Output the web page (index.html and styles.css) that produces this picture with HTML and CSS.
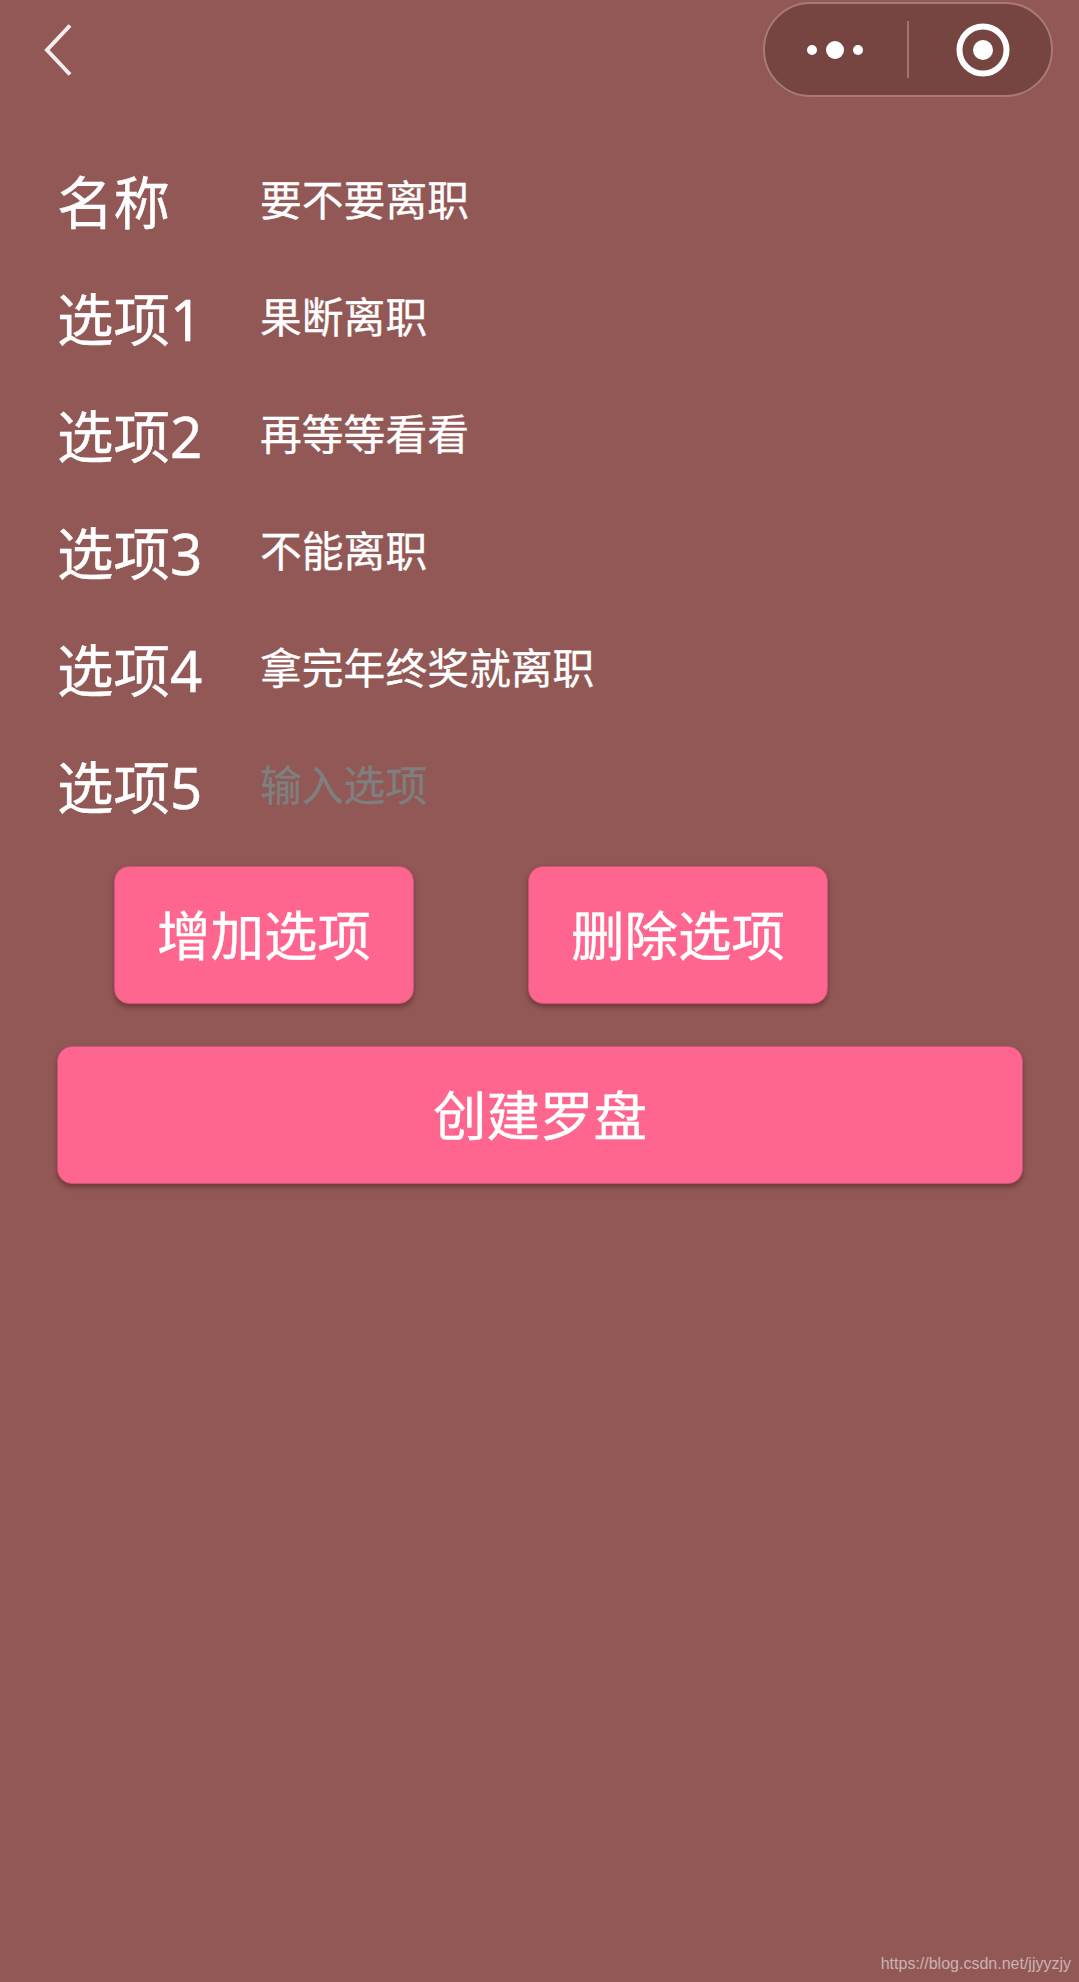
FILE: index.html
```html
<!DOCTYPE html>
<html lang="zh-CN">
<head>
<meta charset="utf-8">
<title>创建罗盘</title>
<link rel="stylesheet" href="styles.css">
</head>
<body>
<div class="page">
  <header class="nav">
    <svg class="back" viewBox="0 0 28 52" width="28" height="52"><path d="M26 1.500 3 26l23 24.500" fill="none" stroke="#f5eeee" stroke-width="4"/></svg>
    <div class="capsule">
      <div class="cap-left">
        <svg viewBox="0 0 60 20" width="60" height="20"><circle cx="7" cy="10" r="5" fill="#fff"/><circle cx="30" cy="10" r="9" fill="#fff"/><circle cx="53" cy="10" r="5" fill="#fff"/></svg>
      </div>
      <div class="cap-div"></div>
      <div class="cap-right">
        <svg viewBox="0 0 54 54" width="54" height="54"><circle cx="27" cy="27" r="23.500" fill="none" stroke="#fff" stroke-width="6"/><circle cx="27" cy="27" r="10" fill="#fff"/></svg>
      </div>
    </div>
  </header>
  <main class="form">
    <div class="row"><div class="label">名称</div><div class="value">要不要离职</div></div>
    <div class="row"><div class="label">选项1</div><div class="value">果断离职</div></div>
    <div class="row"><div class="label">选项2</div><div class="value">再等等看看</div></div>
    <div class="row"><div class="label">选项3</div><div class="value">不能离职</div></div>
    <div class="row"><div class="label">选项4</div><div class="value">拿完年终奖就离职</div></div>
    <div class="row"><div class="label">选项5</div><div class="value placeholder">输入选项</div></div>
    <div class="actions">
      <button class="btn small">增加选项</button>
      <button class="btn small">删除选项</button>
    </div>
    <button class="btn wide">创建罗盘</button>
  </main>
  <div class="mark">https://blog.csdn.net/jjyyzjy</div>
</div>
</body>
</html>
```
FILE: styles.css
```css
* { box-sizing: border-box; }
html, body { margin: 0; padding: 0; }
body { background: #925856; font-family: "Noto Sans", "Noto Sans CJK SC", sans-serif; color: #fff; }
.page { position: relative; width: 1079px; height: 1982px; overflow: hidden; background: #925856; }
.nav { display: flex; justify-content: space-between; align-items: center; height: 97px; padding: 2px 26px 0 44px; }
.back { display: block; margin-top: 1px; }
.capsule { display: flex; align-items: center; width: 290px; height: 95px; background: #764541; border: 2px solid #a67a78; border-radius: 48px; }
.cap-left { width: 142px; display: flex; justify-content: center; padding-right: 2px; }
.cap-div { width: 2px; height: 57px; background: #a07371; }
.cap-right { flex: 1; display: flex; justify-content: center; padding-left: 5px; }
.cap-left svg, .cap-right svg { display: block; }
.form { padding: 0 57px; }
.row { display: flex; align-items: center; height: 117px; }
.row:first-child { margin-top: 46px; }
.label { width: 203px; font-size: 56.500px; line-height: 80px; margin-top: 2px; -webkit-text-stroke: 0.4px #fff; }
.value { font-size: 41.800px; line-height: 60px; margin-top: -3px; -webkit-text-stroke: 0.3px #fff; }
.placeholder { color: #7e7f7e; -webkit-text-stroke: 0.3px #7e7f7e; }
.actions { display: flex; gap: 114px; padding-left: 57px; margin-top: 21px; }
.btn { display: block; height: 138px; padding: 2px 0 0; background: #ff668f; color: #fff; border: 1px solid #c9557a; border-radius: 15px; box-shadow: 0 3px 5px rgba(60, 20, 20, 0.45); font-family: inherit; font-size: 53.500px; line-height: 1; text-align: center; -webkit-text-stroke: 0.4px #fff; }
.small { width: 300px; }
.wide { width: 966px; margin-top: 42px; padding-top: 2px; }
.mark { position: absolute; right: 8px; bottom: 9px; font-family: "Liberation Sans", Arial, sans-serif; font-size: 16px; color: rgba(255, 255, 255, 0.55); }
```
